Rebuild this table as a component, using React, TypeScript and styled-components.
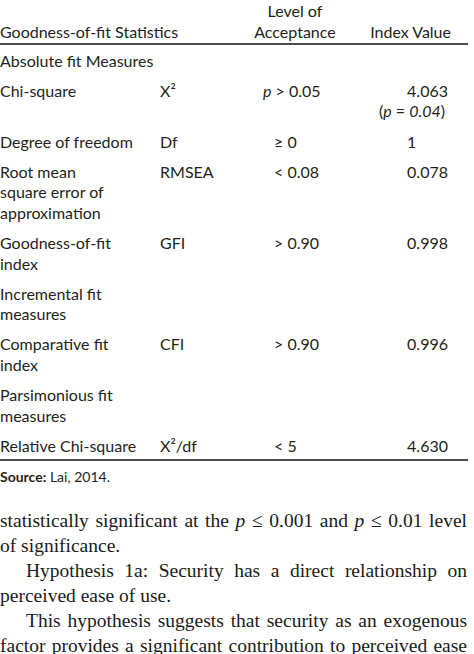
import React from "react";
import styled, { createGlobalStyle } from "styled-components";

const GlobalStyle = createGlobalStyle`
  html, body {
    margin: 0;
    padding: 0;
    background: #ffffff;
    overflow: hidden;
  }
`;

const Page = styled.div`
  width: 474px;
  height: 654px;
  overflow: hidden;
  display: flex;
  flex-direction: column;
`;

const Table = styled.table`
  width: 468px;
  border-collapse: collapse;
  table-layout: fixed;
  font-family: Lato, "Open Sans", sans-serif;
  font-size: 16px;
  color: #231f20;
`;

const HeadCell = styled.th<{ $align?: "left" | "center" | "right" }>`
  font-weight: 400;
  text-align: ${({ $align }) => $align ?? "left"};
  vertical-align: bottom;
  line-height: 21px;
  padding: 0 ${({ $align }) => ($align === "right" ? "17px" : "0")} 1px 0;
  border-bottom: 2px solid #4a4a4a;
  white-space: nowrap;
`;

const Row = styled.tr`
  &:last-child td {
    border-bottom: 2px solid #4a4a4a;
    padding-bottom: 2.5px;
  }
`;

const Cell = styled.td`
  vertical-align: top;
  line-height: 20.6px;
  padding: 5.75px 0 3.75px;
  white-space: nowrap;
`;

const LevelCell = styled(Cell)<{ $indent: number }>`
  padding-left: ${({ $indent }) => $indent}px;
`;

const IndexCell = styled(Cell)`
  text-align: right;
  padding-right: 20px;
`;

const Phantom = styled.span`
  visibility: hidden;
`;

const Note = styled.div`
  display: block;
  padding-right: 3px;
`;

const Source = styled.p`
  margin: 7px 0 0;
  font-family: Lato, "Open Sans", sans-serif;
  font-size: 14px;
  line-height: 18px;
  color: #231f20;
`;

const Body = styled.div`
  width: 467px;
  margin-top: 22px;
  font-family: "Liberation Serif", "Times New Roman", serif;
  font-size: 19.5px;
  line-height: 25px;
  color: #1a1a1a;
  text-align: justify;
`;

const Para = styled.p<{ $indent?: boolean }>`
  margin: 0;
  text-indent: ${({ $indent }) => ($indent ? "26px" : "0")};
`;

type Stat = {
  measure: React.ReactNode;
  symbol?: string;
  level?: React.ReactNode;
  levelIndent?: number;
  index?: React.ReactNode;
};

const stats: Stat[] = [
  { measure: "Absolute fit Measures" },
  {
    measure: "Chi-square",
    symbol: "X²",
    level: (
      <>
        <i>p</i> &gt; 0.05
      </>
    ),
    levelIndent: 13,
    index: (
      <>
        4.063
        <Note>
          (<i>p</i> = <i>0.04</i>)
        </Note>
      </>
    ),
  },
  {
    measure: "Degree of freedom",
    symbol: "Df",
    level: "≥ 0",
    index: (
      <>
        1<Phantom>.000</Phantom>
      </>
    ),
  },
  {
    measure: (
      <>
        Root mean
        <br />
        square error of
        <br />
        approximation
      </>
    ),
    symbol: "RMSEA",
    level: "< 0.08",
    index: "0.078",
  },
  {
    measure: (
      <>
        Goodness-of-fit
        <br />
        index
      </>
    ),
    symbol: "GFI",
    level: "> 0.90",
    index: "0.998",
  },
  {
    measure: (
      <>
        Incremental fit
        <br />
        measures
      </>
    ),
  },
  {
    measure: (
      <>
        Comparative fit
        <br />
        index
      </>
    ),
    symbol: "CFI",
    level: "> 0.90",
    index: "0.996",
  },
  {
    measure: (
      <>
        Parsimonious fit
        <br />
        measures
      </>
    ),
  },
  {
    measure: "Relative Chi-square",
    symbol: "X²/df",
    level: "< 5",
    index: "4.630",
  },
];

export default function App() {
  return (
    <Page>
      <GlobalStyle />
      <Table>
        <colgroup>
          <col style={{ width: 160 }} />
          <col style={{ width: 90 }} />
          <col style={{ width: 90 }} />
          <col style={{ width: 128 }} />
        </colgroup>
        <thead>
          <tr>
            <HeadCell>Goodness-of-fit Statistics</HeadCell>
            <HeadCell />
            <HeadCell $align="center">
              Level of
              <br />
              Acceptance
            </HeadCell>
            <HeadCell $align="right">Index Value</HeadCell>
          </tr>
        </thead>
        <tbody>
          {stats.map((s, i) => (
            <Row key={i}>
              <Cell>{s.measure}</Cell>
              <Cell>{s.symbol}</Cell>
              <LevelCell $indent={s.levelIndent ?? 24}>{s.level}</LevelCell>
              <IndexCell>{s.index}</IndexCell>
            </Row>
          ))}
        </tbody>
      </Table>
      <Source>
        <b>Source:</b> Lai, 2014.
      </Source>
      <Body>
        <Para>
          statistically significant at the <i>p</i> ≤ 0.001 and <i>p</i> ≤ 0.01
          level of significance.
        </Para>
        <Para $indent>
          Hypothesis 1a: Security has a direct relationship on perceived ease of
          use.
        </Para>
        <Para $indent>
          This hypothesis suggests that security as an exogenous factor provides
          a significant contribution to perceived ease of use.
        </Para>
      </Body>
    </Page>
  );
}
